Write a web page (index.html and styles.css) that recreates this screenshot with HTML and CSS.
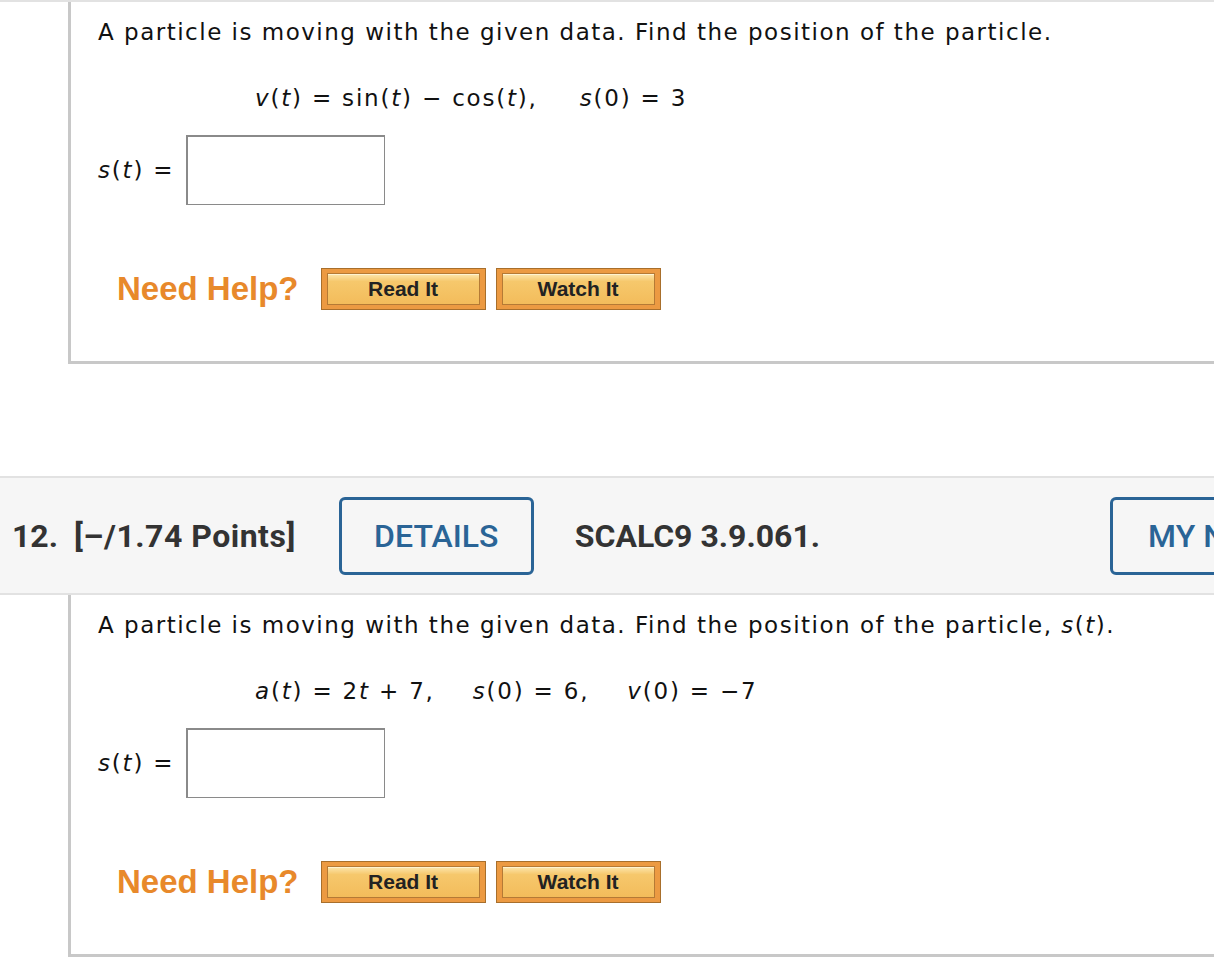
FILE: index.html
```html
<!DOCTYPE html>
<html>
<head>
<meta charset="utf-8">
<link rel="stylesheet" href="styles.css">
</head>
<body>
<div class="prev-end"></div>
<div class="qbox">
  <p class="prompt">A particle is moving with the given data. Find the position of the particle.</p>
  <p class="eq"><i>v</i>(<i>t</i>) = sin(<i>t</i>) − cos(<i>t</i>),<span class="sp"></span><i>s</i>(0) = 3</p>
  <div class="answer"><span class="lbl"><i>s</i>(<i>t</i>) =</span><span class="inp"></span></div>
  <div class="help"><span class="need">Need Help?</span><span class="btn"><span class="btn-in">Read It</span></span><span class="btn"><span class="btn-in">Watch It</span></span></div>
</div>
<div class="qhead">
  <span class="qnum">12.</span>
  <span class="pts">[–/1.74 Points]</span>
  <span class="details">DETAILS</span>
  <span class="code">SCALC9 3.9.061.</span>
  <span class="mynotes">MY NOTES</span>
</div>
<div class="qbox">
  <p class="prompt">A particle is moving with the given data. Find the position of the particle, <i>s</i>(<i>t</i>).</p>
  <p class="eq"><i>a</i>(<i>t</i>) = 2<i>t</i> + 7,<span class="sp2"></span><i>s</i>(0) = 6,<span class="sp2"></span><i>v</i>(0) = −7</p>
  <div class="answer"><span class="lbl"><i>s</i>(<i>t</i>) =</span><span class="inp"></span></div>
  <div class="help"><span class="need">Need Help?</span><span class="btn"><span class="btn-in">Read It</span></span><span class="btn"><span class="btn-in">Watch It</span></span></div>
</div>
</body>
</html>
```
FILE: styles.css
```css
html, body { margin: 0; padding: 0; background: #fff; }
body { width: 1214px; overflow: hidden; font-family: "DejaVu Sans", Verdana, sans-serif; color: #111; }
.prev-end { height: 0; border-top: 2px solid #e2e2e2; }
.qbox {
  margin-left: 68px;
  border-left: 3px solid #c8c8c8;
  border-bottom: 3px solid #c8c8c8;
  padding: 14px 0 51px 27px;
}
.prompt { margin: 0; font-size: 23px; letter-spacing: 1.5px; line-height: 32px; white-space: nowrap; }
.eq { margin: 34px 0 0 157px; font-size: 23px; letter-spacing: 1.8px; line-height: 32px; white-space: nowrap; }
.sp { display: inline-block; width: 42px; }
.sp2 { display: inline-block; width: 38px; }
.answer { display: flex; align-items: center; margin-top: 21px; height: 70px; }
.lbl { font-size: 23px; letter-spacing: 1.8px; width: 88px; }
.inp { box-sizing: border-box; width: 199px; height: 70px; border: 2px solid #8a8a8a; border-right-width: 1px; border-bottom-width: 1px; }
.help { display: flex; align-items: center; margin-top: 63px; height: 42px; }
.need { font-family: "Liberation Sans", Arial, sans-serif; font-weight: bold; font-size: 33px; color: #e8892b; margin-left: 19px; margin-right: 22px; }
.btn {
  box-sizing: border-box; width: 165px; height: 42px; margin-right: 10px;
  border: 1px solid #a86f2c; background: #ec9a42; padding: 4px 5px;
  display: flex;
}
.btn-in {
  flex: 1; border: 1px solid #b57a35;
  background: linear-gradient(#fde6ad 0, #f6c86c 25%, #f3bc5b 100%);
  display: flex; align-items: center; justify-content: center;
  font-family: "Liberation Sans", Arial, sans-serif; font-weight: bold; font-size: 21px; color: #222;
  box-shadow: inset 0 1px 0 #fff3d0;
}
.qhead {
  margin-top: 112px;
  border-top: 2px solid #e2e2e2; border-bottom: 2px solid #e2e2e2;
  background: #f6f6f6; height: 115px;
  display: flex; align-items: center; white-space: nowrap; overflow: hidden;
  font-family: Roboto, "Open Sans", sans-serif; font-weight: bold; font-size: 32px; color: #333;
  padding-left: 12px;
}
.qhead > span { flex-shrink: 0; }
.qnum { margin-right: 16px; }
.pts { margin-right: 43px; letter-spacing: 0.5px; }
.details {
  box-sizing: border-box; width: 195px; height: 78px; border: 3px solid #2a6496; border-radius: 6px;
  color: #2a6496; display: flex; align-items: center; justify-content: center; font-weight: 500; font-size: 32px;
  margin-right: 41px;
}
.code { margin-right: 290px; }
.mynotes {
  box-sizing: border-box; width: 240px; height: 78px; border: 3px solid #2a6496; border-radius: 6px;
  color: #2a6496; display: flex; align-items: center; padding-left: 35px; font-weight: 500; font-size: 32px;
}
```
